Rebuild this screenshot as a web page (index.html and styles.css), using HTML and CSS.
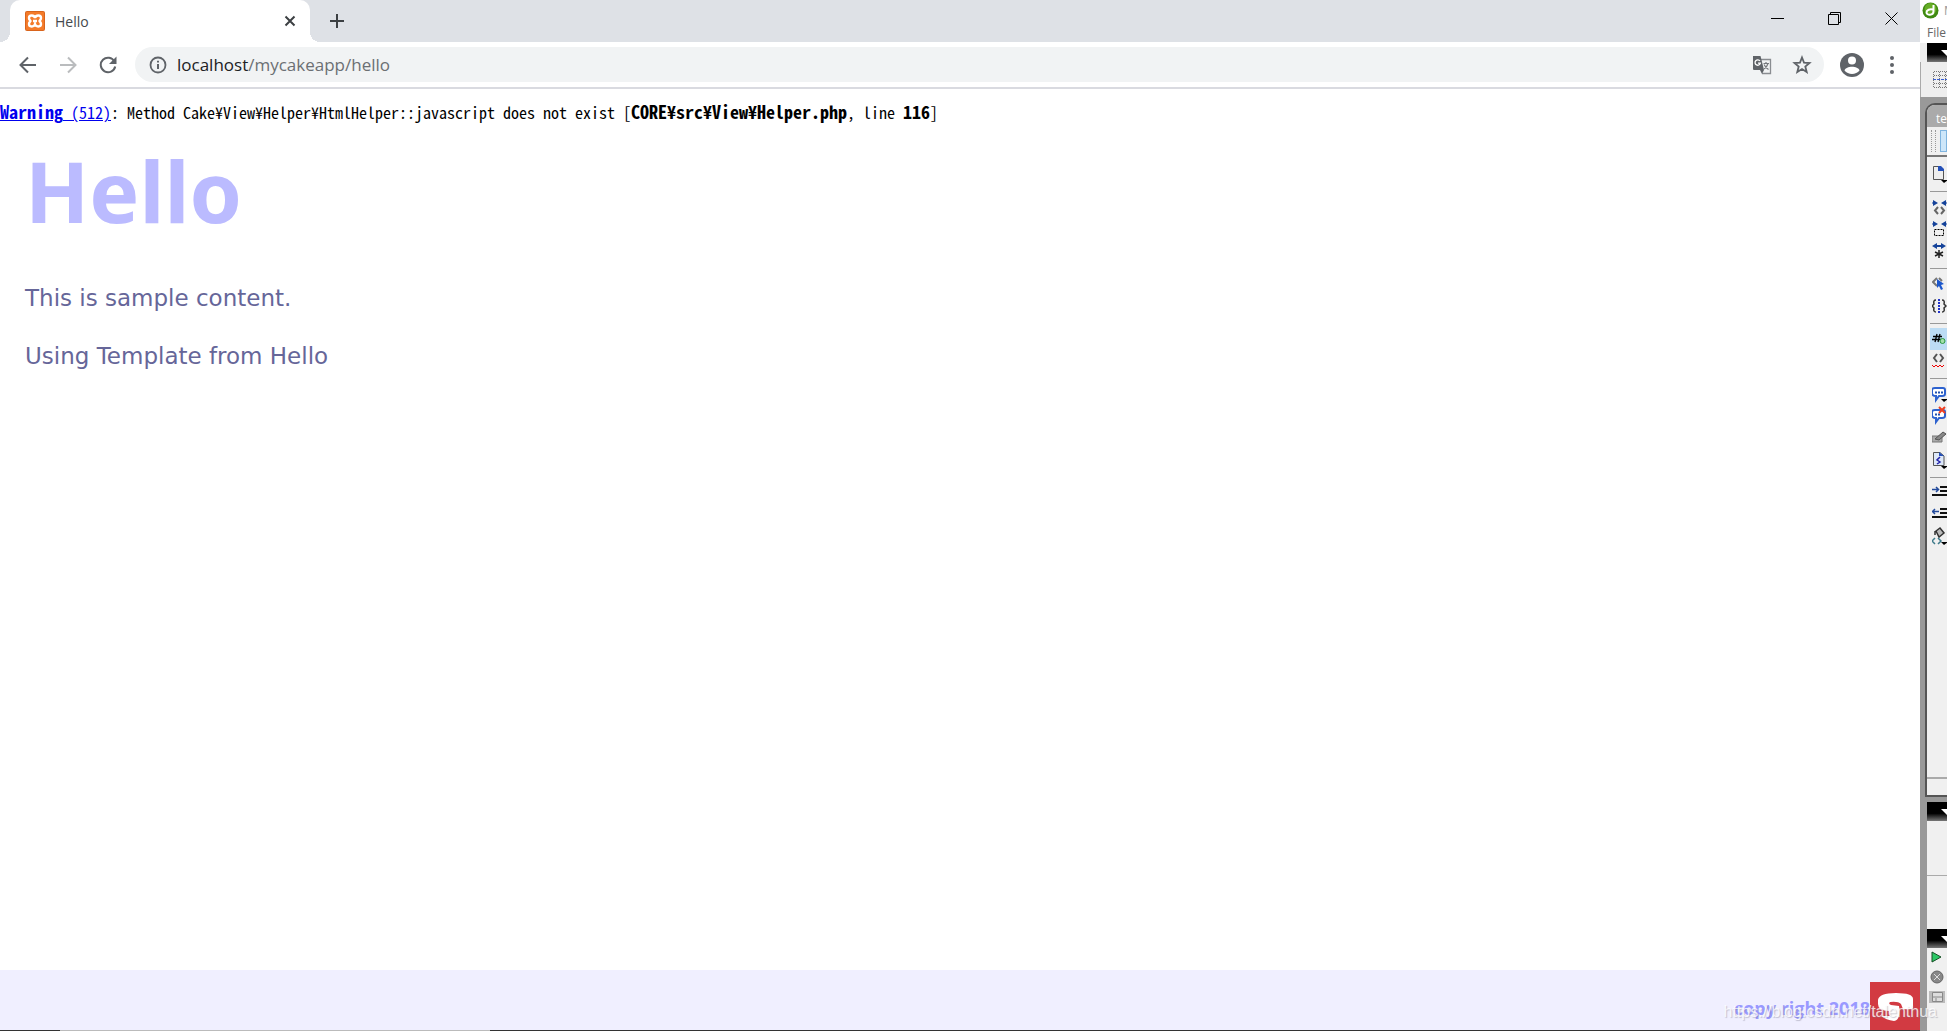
FILE: index.html
```
<!DOCTYPE html>
<html lang="en">
<head>
    <meta charset="UTF-8">
    <meta name="viewport" content="width=device-width, initial-scale=1.0">
    <title>Hello</title>
    <link rel="stylesheet" href="styles.css">
</head>
<body>
    <div class="screen">
        <div class="browser">
            <div class="tab-strip">
                <div class="tab">
                    <svg class="favicon" viewBox="0 0 20 20">
                        <rect width="20" height="20" rx="2" fill="#d9641c"/>
                        <rect x="1" y="1" width="18" height="18" rx="1" fill="#f47b2a"/>
                        <path d="M10 7C9 3.500 4 4 4 7C4 9 5.500 9.300 5.500 10C5.500 10.700 4 11 4 13C4 16 9 16.500 10 13C11 16.500 16 16 16 13C16 11 14.500 10.700 14.500 10C14.500 9.300 16 9 16 7C16 4 11 3.500 10 7M8 10H12" fill="none" stroke="#fff" stroke-width="2.400"/>
                    </svg>
                    <span class="tab-title">Hello</span>
                    <button class="icon-btn close-tab" aria-label="Close tab">
                        <svg width="12" height="12" viewBox="0 0 12 12"><path d="M1.500 1.500L10.500 10.500M10.500 1.500L1.500 10.500" stroke="#3c4043" stroke-width="2"/></svg>
                    </button>
                </div>
                <button class="icon-btn new-tab" aria-label="New tab">
                    <svg width="16" height="16" viewBox="0 0 16 16"><path d="M8 1V15M1 8H15" stroke="#3c4043" stroke-width="2"/></svg>
                </button>
                <div class="window-buttons">
                    <button class="icon-btn" aria-label="Minimize">
                        <svg width="14" height="14" viewBox="0 0 14 14"><path d="M0 6.500H13" stroke="#000"/></svg>
                    </button>
                    <button class="icon-btn" aria-label="Restore">
                        <svg width="14" height="14" viewBox="0 0 14 14"><path d="M.5 2.500H10.500V12.500H.5ZM2.500 2V.5H12.500V10.500H11" fill="none" stroke="#000"/></svg>
                    </button>
                    <button class="icon-btn" aria-label="Close">
                        <svg width="14" height="14" viewBox="0 0 14 14"><path d="M.5 .5L12.500 12.500M12.500 .5L.5 12.500" stroke="#000"/></svg>
                    </button>
                </div>
            </div>

            <div class="toolbar">
                <button class="icon-btn" aria-label="Back">
                    <svg width="18" height="18" viewBox="0 0 18 18"><path d="M17 9H2M9 1.500L1.500 9L9 16.500" fill="none" stroke="#5f6368" stroke-width="2"/></svg>
                </button>
                <button class="icon-btn" aria-label="Forward">
                    <svg width="18" height="18" viewBox="0 0 18 18"><path d="M1 9H16M9 1.500L16.500 9L9 16.500" fill="none" stroke="#babcbe" stroke-width="2"/></svg>
                </button>
                <button class="icon-btn" aria-label="Reload">
                    <svg width="18" height="18" viewBox="0 0 18 18"><path d="M15.500 5.500A7.300 7.300 0 1 0 16.200 10.500" fill="none" stroke="#5f6368" stroke-width="2"/><path d="M17.500 .5V8H10Z" fill="#5f6368"/></svg>
                </button>
                <div class="address">
                    <svg width="18" height="18" viewBox="0 0 18 18"><circle cx="9" cy="9" r="7.500" fill="none" stroke="#5f6368" stroke-width="1.800"/><path d="M9 8V13M9 4.800V6.600" stroke="#5f6368" stroke-width="2"/></svg>
                    <a class="url" href="#"><span class="host">localhost</span>/mycakeapp/hello</a>
                    <button class="icon-btn" aria-label="Translate">
                        <svg width="20" height="20" viewBox="0 0 20 20">
                            <path d="M8 4.500H18.500V18.500H10" fill="none" stroke="#8a8d91" stroke-width="1.300"/>
                            <path d="M1 1H8.500L12 15H2Q1 15 1 14Z" fill="#5f6368"/>
                            <path d="M8 15H12L10 19Z" fill="#5f6368"/>
                            <path d="M8 6A2.700 2.700 0 1 0 8.400 8.200H6" fill="none" stroke="#fff" stroke-width="1.300"/>
                            <path d="M11.500 8.500H17M14 7V8.500M16 8.500Q15 12 12 14M12 9.500Q13.500 12.500 16.500 14.500" fill="none" stroke="#777a7e" stroke-width="1.200"/>
                        </svg>
                    </button>
                    <button class="icon-btn" aria-label="Bookmark">
                        <svg width="20" height="20" viewBox="0 0 20 20"><path d="M10 2.500L12 7.600L17.500 8L13.300 11.500L14.700 17L10 14L5.300 17L6.700 11.500L2.500 8L8 7.600Z" fill="none" stroke="#5f6368" stroke-width="1.800"/></svg>
                    </button>
                </div>
                <button class="icon-btn profile" aria-label="Profile">
                    <svg width="24" height="24" viewBox="0 0 24 24"><circle cx="12" cy="12" r="12" fill="#5f6368"/><circle cx="12" cy="7.500" r="4" fill="#fff"/><path d="M4.500 17.500C6 12.500 18 12.500 19.500 17.500C16 22 8 22 4.500 17.500Z" fill="#fff"/></svg>
                </button>
                <button class="icon-btn" aria-label="Menu">
                    <svg width="4" height="18" viewBox="0 0 4 18"><g fill="#5f6368"><circle cx="2" cy="2" r="2"/><circle cx="2" cy="9" r="2"/><circle cx="2" cy="16" r="2"/></g></svg>
                </button>
            </div>

            <div class="page">
                <div class="warning"><a href="#"><b>Warning</b> (512)</a>: Method Cake¥View¥Helper¥HtmlHelper::javascript does not exist [<b>CORE¥src¥View¥Helper.php</b>, line <b>116</b>]</div>
                <div class="content">
                    <h1>Hello</h1>
                    <p>This is sample content.</p>
                    <p>Using Template from Hello</p>
                </div>
                <div class="footer">
                    <span class="copyright">copy right 2018</span>
                    <svg class="ime" viewBox="0 0 50 48">
                        <rect width="50" height="48" fill="#d23a42"/>
                        <path d="M8 18Q9 11 26 11Q43 11 43 17V26Q42 28 33 27L31 22Q28 19 20 20Q18 22 21 23L29 24Q31 38 24 39Q16 38 11 34L20 34L19 29Q8 29 8 22Z" fill="#fff"/>
                    </svg>
                </div>
            </div>
            <div class="taskbar-edge"><i></i></div>
        </div>

        <div class="editor">
            <div class="editor-title">
                <svg width="17" height="17" viewBox="0 0 17 17"><circle cx="8.500" cy="8.500" r="8" fill="#3f8a10"/><circle cx="8.500" cy="7" r="6" fill="#66ad25"/><path d="M11.500 3V9C11.500 14 4.500 13.500 4.500 10.500C4.500 7.500 8 7 11 7.500" fill="none" stroke="#fff" stroke-width="2"/></svg>
                <span>My</span>
            </div>
            <div class="editor-menu">File</div>
            <div class="bar first-bar"></div>
            <div class="insert-row">
                <svg width="20" height="18" viewBox="0 0 20 18"><path d="M1 .5H20M1 4.500H20M1 12.500H20M1 16.500H20M.5 1V17M6.500 1V17M12.500 1V17" stroke="#777" stroke-dasharray="1 1"/><path d="M0 8.500H20" stroke="#3a5fd0" stroke-dasharray="3 1"/></svg>
            </div>
            <div class="document">
                <div class="doc-tab">te</div>
                <div class="doc-bar"><i class="grip"></i><i class="view"></i></div>
                <div class="tools">
                    <div class="group">
                        <svg viewBox="0 0 20 20"><path d="M1.500 2.500H7L11.500 7V15.500H1.500Z" fill="#eee" stroke="#555"/><path d="M6 2V7H12V5L9 2Z" fill="#2450b8"/><path d="M9 16H16L12 19Z"/></svg>
                    </div>
                    <div class="group">
                        <svg viewBox="0 0 20 20"><path d="M1 3L6 6L1 9ZM14 3L9 6L14 9Z" fill="#15439a"/><path d="M0 6H4M11 6H16" stroke="#15439a"/><path d="M6 10L3 13.500L6 17M9 10L12 13.500L9 17" fill="none" stroke="#666" stroke-width="2"/></svg>
                        <svg viewBox="0 0 20 20"><path d="M1 2L6 5L1 8ZM14 2L9 5L14 8Z" fill="#15439a"/><path d="M0 5H4M11 5H16" stroke="#15439a"/><rect x="2.500" y="10.500" width="9" height="6" fill="none" stroke="#000" stroke-dasharray="2 1"/></svg>
                        <svg viewBox="0 0 20 20"><path d="M5 2L0 5L5 8ZM9 2L14 5L9 8Z" fill="#15439a"/><path d="M3 5H12" stroke="#15439a" stroke-width="2"/><path d="M7 9V17M3 11L11 15M11 11L3 15" stroke="#222" stroke-width="1.500"/></svg>
                    </div>
                    <div class="group">
                        <svg viewBox="0 0 20 20"><path d="M5 4L1 8L5 12M7 4L10 7" fill="none" stroke="#777" stroke-width="2"/><path d="M5 5L12 10L9 11L11 15L9 16L7 12L5 14Z" fill="#1c57cc"/></svg>
                        <svg viewBox="0 0 20 20"><path d="M4 4Q1 4 2 8L0 10L2 12Q1 16 4 16M10 4Q13 4 12 8L14 10L12 12Q13 16 10 16" fill="none" stroke="#333" stroke-width="1.500"/><path d="M7 3V18" stroke="#23c" stroke-width="2" stroke-dasharray="2 1"/></svg>
                    </div>
                    <div class="group selected">
                        <svg viewBox="0 0 20 20"><path d="M5 5L3 13M8 5L6 13M1 7.500H10M0 10.500H9" stroke="#000" stroke-width="1.300"/><circle cx="10.500" cy="12" r="2.500" fill="#a3dfaa" stroke="#289740"/></svg>
                        <svg viewBox="0 0 20 20"><path d="M5 3L2 7L5 11M8 3L11 7L8 11" fill="none" stroke="#555" stroke-width="2"/><path d="M0 14L2 16L4 14L6 16L8 14L10 16L12 14" fill="none" stroke="#e00"/></svg>
                    </div>
                    <div class="group">
                        <svg viewBox="0 0 20 20"><path d="M3 4H11Q13 4 13 6V10Q13 12 10 12H7L4 16V12Q0 12 0 9V6Q0 4 3 4Z" fill="#fff" stroke="#2d62cf" stroke-width="2"/><path d="M3 8.500H11" stroke="#2050b0" stroke-width="2" stroke-dasharray="2 1"/><path d="M9 15H16L12 18Z"/></svg>
                        <svg viewBox="0 0 20 20"><path d="M3 4H11Q13 4 13 6V10Q13 12 10 12H7L4 16V12Q0 12 0 9V6Q0 4 3 4Z" fill="#fff" stroke="#2d62cf" stroke-width="2"/><path d="M3 8.500H8" stroke="#2050b0" stroke-width="2" stroke-dasharray="2 1"/><path d="M7 1L13 7M13 1L7 7" stroke="#f04020" stroke-width="2"/></svg>
                        <svg viewBox="0 0 20 20"><path d="M0 8H10V14H0Z" fill="#aaa" stroke="#777"/><path d="M3 11L11 4L14 6L7 12Z" fill="#888" stroke="#555"/></svg>
                        <svg viewBox="0 0 20 20"><path d="M1.500 2.500H8L12 6V15.500H1.500Z" fill="#dde8f8" stroke="#555"/><path d="M7 2V6H12" fill="#2450b8"/><path d="M8 7L5 10L8 12L5 14" fill="none" stroke="#22a" stroke-width="1.500"/><path d="M9 16H16L12 19Z"/></svg>
                    </div>
                    <div class="group">
                        <svg viewBox="0 0 20 20"><path d="M0 6.500H7M4 4L6.500 6.500L4 9" fill="none" stroke="#224a9c" stroke-width="1.500"/><path d="M8 4H20M8 8H20M0 12H20" stroke="#111" stroke-width="2"/></svg>
                        <svg viewBox="0 0 20 20"><path d="M0 6.500H7M3 4L.5 6.500L3 9" fill="none" stroke="#224a9c" stroke-width="1.500"/><path d="M8 4H20M8 8H20M0 12H20" stroke="#111" stroke-width="2"/></svg>
                        <svg viewBox="0 0 20 20"><path d="M4 4L8 1L12 6L7 10ZM3 8V4" fill="#bbb" stroke="#333" stroke-width="1.500"/><path d="M3 11L0 14L3 17M6 11L9 14L6 17" fill="none" stroke="#3d7a8a" stroke-width="1.500"/><path d="M9 15H16L12 18Z"/></svg>
                    </div>
                </div>
                <div class="status"></div>
            </div>
            <div class="panel">
                <div class="bar"></div>
                <div class="panel-body properties"></div>
                <div class="bar"></div>
                <div class="panel-body results">
                    <svg viewBox="0 0 20 20"><path d="M5 4L14 9L5 14Z" fill="#2bc765" stroke="#174f25"/></svg>
                    <svg viewBox="0 0 20 20"><circle cx="10" cy="9" r="6" fill="#888" stroke="#666"/><path d="M7 6L13 12M13 6L7 12" stroke="#ddd"/></svg>
                    <svg viewBox="0 0 20 20"><path d="M2 3H18V15H2Z" fill="#bbb"/><path d="M5.500 4.500H15.500V13.500H5.500ZM5 9H15M9 10V13" fill="#ddd" stroke="#888"/></svg>
                </div>
            </div>
        </div>
        <div class="watermark">https://blog.csdn.net/talenthua</div>
    </div>
</body>
</html>
```
FILE: styles.css
```
* {
    box-sizing: border-box;
}
body {
    margin: 0;
    font-family: "Open Sans", "Noto Sans", sans-serif;
    background: #fff;
}
svg {
    display: block;
    flex: none;
}
.screen {
    position: relative;
    display: flex;
    height: 100vh;
    overflow: hidden;
}
.browser {
    flex: 1;
    min-width: 0;
    display: flex;
    flex-direction: column;
}
.icon-btn {
    display: flex;
    align-items: center;
    justify-content: center;
    padding: 0;
    border: none;
    background: none;
    cursor: pointer;
}

/* tabs */
.tab-strip {
    display: flex;
    height: 42px;
    padding-left: 10px;
    background: #dee1e6;
}
.tab {
    position: relative;
    display: flex;
    align-items: center;
    width: 300px;
    padding: 0 14px 0 15px;
    background: #fff;
    border-radius: 10px 10px 0 0;
}
.tab::before,
.tab::after {
    content: "";
    position: absolute;
    bottom: 0;
    width: 10px;
    height: 10px;
}
.tab::before {
    left: -10px;
    background: radial-gradient(circle at 0 0, #dee1e6 10px, #fff 10px);
}
.tab::after {
    right: -10px;
    background: radial-gradient(circle at 100% 0, #dee1e6 10px, #fff 10px);
}
.favicon {
    width: 20px;
    height: 20px;
}
.tab-title {
    flex: 1;
    margin-left: 10px;
    font-size: 14px;
    color: #45494d;
}
.new-tab {
    width: 54px;
}
.window-buttons {
    display: flex;
    margin-left: auto;
}
.window-buttons .icon-btn {
    width: 57px;
    height: 37px;
}

/* address row */
.toolbar {
    display: flex;
    align-items: center;
    height: 47px;
    padding: 0 24px 0 19px;
    border-bottom: 2px solid #d9dae0;
}
.toolbar > .icon-btn {
    margin-right: 22px;
}
.toolbar > .profile {
    margin-right: 26px;
}
.toolbar > .icon-btn:last-child {
    margin: 0 2px 0 0;
}
.toolbar .address {
    flex: 1;
    display: flex;
    align-items: center;
    gap: 20px;
    height: 35px;
    margin-right: 16px;
    margin-left: -4px;
    padding: 0 12px 0 14px;
    background: #f1f3f4;
    border-radius: 18px;
}
.url {
    flex: 1;
    margin-left: -10px;
    font-size: 17px;
    line-height: 24px;
    color: #6b6f73;
    text-decoration: none;
}
.host {
    color: #202124;
}

/* cake page */
.page {
    flex: 1;
    display: flex;
    flex-direction: column;
}
.warning {
    margin-top: 10px;
    font-family: "Noto Sans CJK JP", monospace;
    font-feature-settings: "hwid";
    font-size: 16px;
    line-height: 24px;
    color: #000;
    white-space: nowrap;
}
.warning b {
    font-size: 18px;
}
.warning a {
    color: #0000ee;
}
.content {
    flex: 1;
    padding-left: 25px;
    font-family: "DejaVu Sans", Verdana, sans-serif;
    font-size: 23px;
    color: #666699;
}
.content h1 {
    margin: 22px 0 47px;
    font-family: "Noto Sans", sans-serif;
    font-size: 84px;
    line-height: 90px;
    color: #bbbbff;
}
.content p {
    margin: 0 0 28px;
    line-height: 30px;
}
.footer {
    display: flex;
    align-items: flex-end;
    justify-content: flex-end;
    height: 60px;
    background: #f0efff;
}
.copyright {
    padding-bottom: 9px;
    font-size: 18px;
    line-height: 26px;
    font-weight: bold;
    color: #9999ff;
}
.ime {
    width: 50px;
    height: 48px;
}
.taskbar-edge {
    height: 1px;
    padding-left: 60px;
    background: #333;
}
.taskbar-edge i {
    display: block;
    width: 430px;
    height: 1px;
    background: #bbb;
}

/* editor behind the browser */
.editor {
    display: flex;
    flex-direction: column;
    width: 27px;
    overflow: hidden;
    background: #999;
}
.editor-title {
    display: flex;
    gap: 5px;
    height: 22px;
    padding: 2px 0 0 2px;
    background: #fff;
    font-size: 12px;
    line-height: 18px;
    color: #999;
}
.editor-menu {
    height: 21px;
    padding-left: 7px;
    background: #fff;
    font-size: 12px;
    line-height: 21px;
    color: #666;
}
.bar {
    position: relative;
    flex: none;
    height: 19px;
    background: linear-gradient(#000 60%, #777);
}
.bar::after {
    content: "";
    position: absolute;
    left: 14px;
    top: 7px;
    border: 6px solid transparent;
    border-top-color: #fff;
}
.first-bar {
    margin-left: 7px;
    box-shadow: -7px 0 #eee;
}
.insert-row {
    height: 35px;
    padding: 9px 0 0 12px;
    background: #eee;
    border-left: 1px solid #aaa;
}
.document {
    flex: 1;
    display: flex;
    flex-direction: column;
    margin: 6px 0 5px 5px;
    border: 2px solid #555;
    border-right: none;
    border-radius: 10px 0 0 0;
    background: #f0f0f0;
}
.doc-tab {
    height: 22px;
    padding-left: 9px;
    border-radius: 8px 0 0 0;
    background: #aaa;
    font-size: 12px;
    line-height: 28px;
    color: #fff;
}
.doc-bar {
    display: flex;
    gap: 4px;
    height: 30px;
    padding: 3px 0 3px 4px;
    border-bottom: 2px solid #777;
}
.grip {
    width: 5px;
    border: 1px dotted #999;
    border-width: 0 1px;
}
.view {
    flex: 1;
    border: 1px solid #7fb4df;
    background: #cde6f9;
}
.tools {
    flex: 1;
    padding: 2px 0 0 3px;
}
.group {
    padding: 4px 0 6px;
    border-bottom: 1px solid #999;
}
.group:last-child {
    border: none;
}
.group svg {
    width: 22px;
    height: 22px;
    padding-left: 2px;
}
.selected svg:first-child {
    background: #bcdcf4;
}
.status {
    height: 18px;
    border-top: 2px solid #aaa;
}
.panel {
    margin-left: 7px;
}
.panel-body {
    background: #f0f0f0;
}
.properties {
    height: 108px;
    background: linear-gradient(#f0f0f0 54px, #aaa 54px, #aaa 55px, #f0f0f0 55px);
}
.results {
    height: 83px;
}
.results svg {
    width: 20px;
    height: 20px;
}
.watermark {
    position: absolute;
    right: 10px;
    bottom: 8px;
    font-family: "Liberation Sans", Arial, sans-serif;
    font-size: 16px;
    line-height: 22px;
    color: rgba(255, 255, 255, 0.8);
    text-shadow: 1px 1px 1px rgba(120, 120, 140, 0.4);
}
```
